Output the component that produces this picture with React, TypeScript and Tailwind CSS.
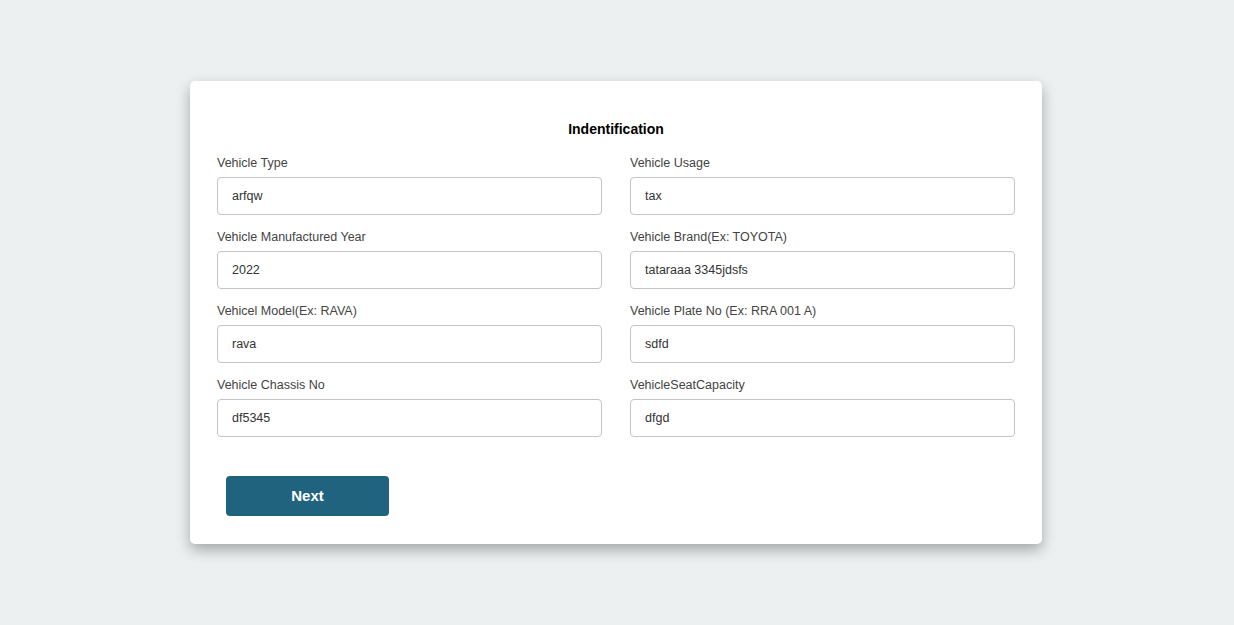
import React from 'react';

const fields: { label: string; value: string }[] = [
  { label: 'Vehicle Type', value: 'arfqw' },
  { label: 'Vehicle Usage', value: 'tax' },
  { label: 'Vehicle Manufactured Year', value: '2022' },
  { label: 'Vehicle Brand(Ex: TOYOTA)', value: 'tataraaa 3345jdsfs' },
  { label: 'Vehicel Model(Ex: RAVA)', value: 'rava' },
  { label: 'Vehicle Plate No (Ex: RRA 001 A)', value: 'sdfd' },
  { label: 'Vehicle Chassis No', value: 'df5345' },
  { label: 'VehicleSeatCapacity', value: 'dfgd' },
];

export default function App() {
  return (
    <div className="min-h-screen w-full bg-[#ecf0f1] pt-[81px] pl-[190px] font-['Liberation_Sans',Arial,sans-serif]">
      <div className="w-[852px] rounded-[5px] bg-white px-[27px] pt-[39px] pb-[28px] shadow-[0_6px_14px_rgba(0,0,0,0.3)]">
        <h2 className="mb-[16px] text-center text-[14px] font-bold leading-[18px] text-black">Indentification</h2>
        <div className="grid grid-cols-2 gap-x-[28px] gap-y-[13px]">
          {fields.map((f) => (
            <div key={f.label} className="flex flex-col">
              <label className="pt-[1px] text-[12.5px] leading-[16px] text-[#444]">{f.label}</label>
              <input
                defaultValue={f.value}
                className="mt-[6px] h-[38px] w-full rounded-[4px] border border-[#c4c4c4] px-[14px] text-[12.5px] text-[#333] outline-none"
              />
            </div>
          ))}
        </div>
        <button className="mt-[39px] ml-[9px] h-[40px] w-[163px] rounded-[4px] bg-[#20637f] text-[15px] font-semibold text-white">
          Next
        </button>
      </div>
    </div>
  );
}
